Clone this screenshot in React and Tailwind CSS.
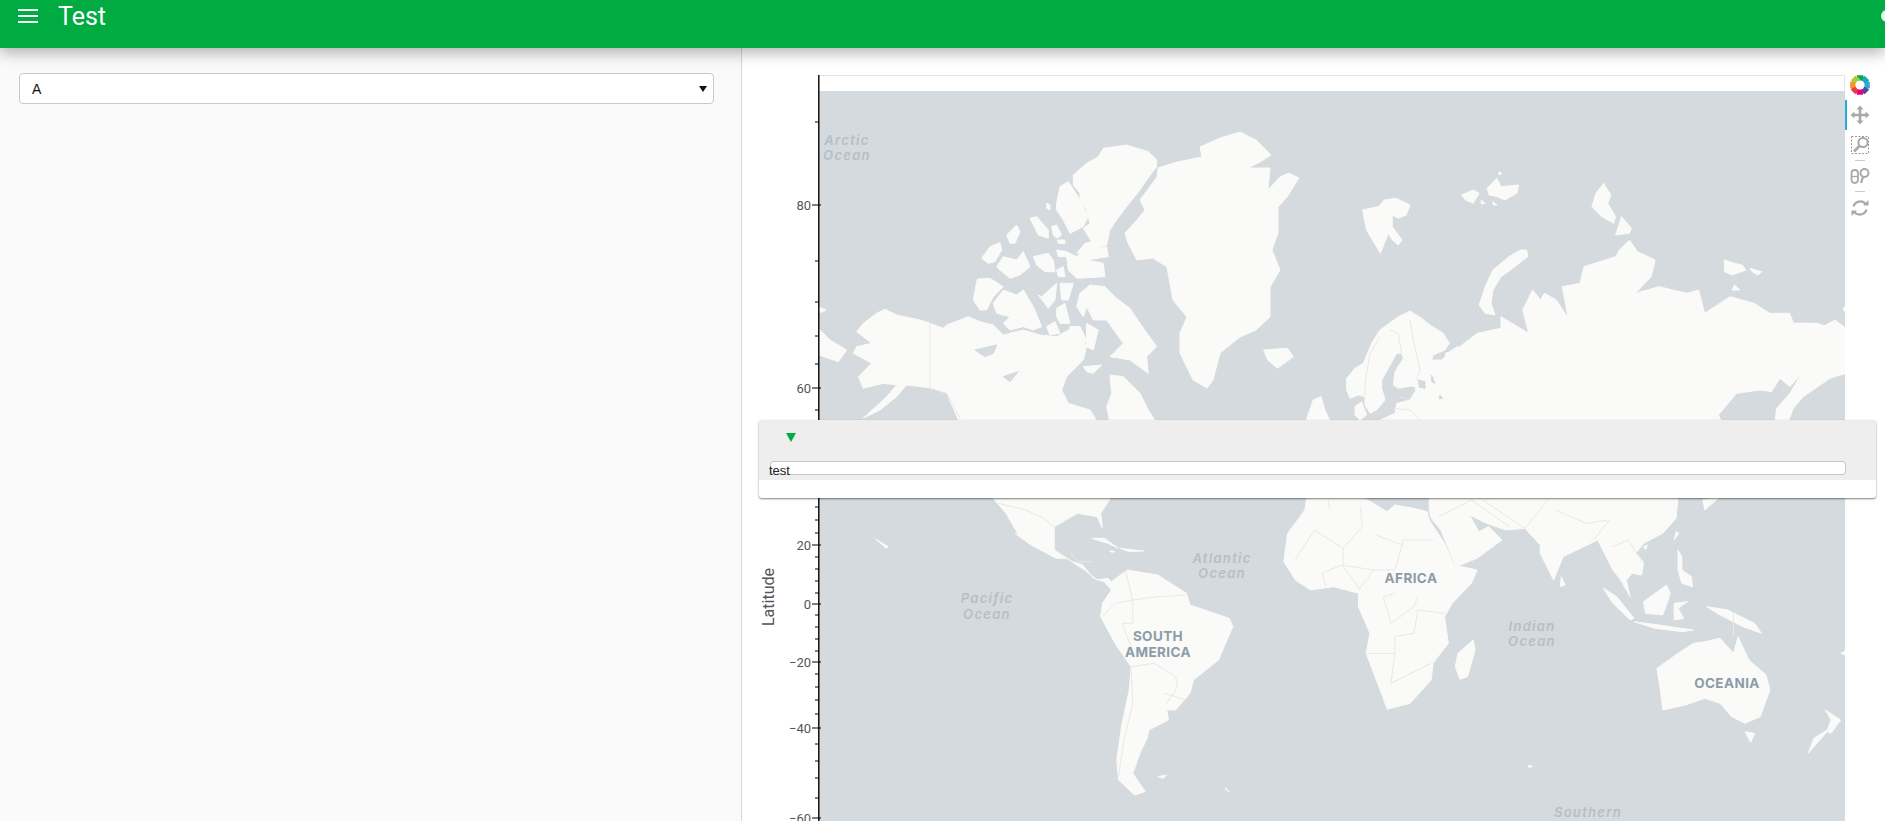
import React from "react";

const LAND = "#fafaf8";
const WATER = "#d4dadd";
const LINE = "#efe6e4";

// tick positions read off the latitude axis
const MAJOR = [
  [205, "80"], [388, "60"], [545, "20"], [604, "0"], [662, "−20"], [728, "−40"], [818, "−60"],
];
const MINOR = [122, 261, 302, 336, 364, 410, 507, 520, 533, 557, 569, 581, 593, 615, 627, 639, 651, 674, 687, 700, 714, 744, 761, 778, 798];

// north part, traced at 3x from (740,60)
const NORTH_WEST = [
  "350,815 370,790 410,760 435,748 470,765 540,780 570,790 610,805 620,795 660,780 685,770 720,785 760,795 790,825 850,810 900,825 950,830 985,810 1020,830 1040,860 1030,900 1010,920 980,950 965,990 985,1030 1050,1050 1075,1090 1110,1090 1100,1040 1115,1000 1110,945 1150,950 1200,1000 1225,1050 1250,1090 660,1090 620,1000 580,985 500,975 470,1010 420,1050 370,1075 440,1010 470,975 430,970 370,985 355,950 395,910 340,880 350,860 395,850",
  "236,740 258,750 245,757 236,755",
  "236,805 270,840 320,870 295,905 236,885",
  "700,720 712,657 750,655 790,680 760,710 740,750 720,750",
  "760,730 790,690 830,705 850,690 880,740 905,800 880,810 850,800 810,810 790,790 810,770 770,760",
  "725,595 750,560 780,548 785,570 765,605 745,610",
  "770,620 790,590 830,600 850,575 870,620 840,645 810,655 780,630",
  "800,525 830,495 840,515 825,550 810,550",
  "870,475 890,470 925,510 925,535 895,525",
  "935,500 950,495 965,525 950,535 940,525",
  "880,590 925,580 940,600 945,635 915,635 890,615",
  "950,570 980,575 1010,590 1030,570 1100,560 1105,590 1040,600 1090,610 1095,650 1010,655 985,630 980,590 955,590",
  "950,630 970,620 975,650 955,650",
  "920,430 930,435 930,450 920,445",
  "952,540 975,540 975,550 955,550",
  "1000,345 1040,310 1075,290 1090,265 1160,255 1225,275 1250,300 1250,320 1220,360 1200,390 1160,440 1130,480 1110,510 1100,555 1040,570 1010,580 1035,550 1055,545 1030,505 1050,490 1040,450 1020,420 1020,400 1000,375",
  "950,430 960,380 985,365 1015,410 1045,470 1030,500 990,520 970,480 950,450",
  "1020,700 1050,675 1095,680 1130,715 1170,745 1200,790 1250,860 1220,890 1225,940 1170,900 1110,890 1150,850 1100,780 1060,780 1040,740 1030,770 1010,740",
  "905,710 950,670 945,720 925,745 895,705",
  "960,670 1000,670 985,720 965,720",
  "1030,920 1085,915 1060,940 1040,935",
  "950,745 975,730 990,790 960,790 950,770",
  "920,800 945,785 960,820 930,825",
  "990,800 1020,800 1040,840 1020,870 985,830",
  "1040,790 1075,810 1060,870 1040,860",
];
const NORTH_WEST_WATER = [
  "705,870 770,855 760,880 735,890",
  "790,950 835,935 810,965",
  "1100,810 1130,830 1120,850 1095,835",
];

// page coordinates, greenland crosses two crops
const GREENLAND = "1125,233 1137,220 1145,210 1140,200 1157,177 1158,168 1177,162 1202,157 1200,147 1220,138 1240,132 1256,140 1271,155 1260,162 1248,168 1270,168 1268,190 1280,177 1289,173 1299,178 1287,197 1278,207 1278,233 1272,250 1280,270 1270,287 1270,317 1256,330 1240,337 1220,353 1213,380 1207,388 1193,380 1180,353 1180,333 1187,317 1173,300 1167,267 1153,258 1137,260 1128,243";

// traced from (1240,60), 2.53x by 3x
const NORTH_EAST = [
  "60,870 120,865 135,890 95,925 70,900",
  "310,450 350,440 365,420 395,415 430,435 420,465 400,475 385,465 385,500 410,540 400,555 385,540 375,520 355,580 335,540 320,510",
  "560,405 590,390 605,400 590,430 570,420",
  "625,385 650,355 660,380 705,375 700,400 670,420 650,410 630,405",
  "610,420 620,430 610,432",
  "640,425 650,435 640,435",
  "655,335 662,340 655,345",
  "725,570 728,590 690,625 660,650 640,690 635,730 645,765 620,760 605,735 620,680 640,630 680,590 710,570",
  "920,370 938,405 930,430 950,470 945,490 915,470 890,440 900,400",
  "965,470 990,505 985,520 950,525",
  "1225,600 1250,610 1270,615 1280,630 1245,645 1225,635",
  "1290,625 1320,635 1310,645 1295,635",
  "1250,675 1265,690 1245,690",
  "1525,745 1532,740 1532,760",
  "520,880 545,870 600,820 660,805 660,770 730,820 715,750 740,690 760,720 770,700 800,720 830,775 815,680 860,670 870,620 950,590 960,570 985,540 1005,575 1050,600 1040,650 1000,700 1060,680 1130,700 1160,690 1175,760 1240,710 1300,730 1340,760 1390,760 1400,790 1460,790 1532,820 1532,880 1300,900 1100,1090 520,1090",
  "185,1020 205,1010 215,1050 230,1090 165,1090",
];

// nordics, traced at 3x from (1330,300)
const NORDIC = [
  "50,235 75,205 100,190 125,130 150,90 205,50 240,33 275,55 300,75 340,100 358,130 345,150 310,165 305,180 335,180 365,150 382,140 420,360 140,365 195,340 200,310 240,300 255,275 258,262 245,258 205,265 190,255 195,215 220,175 215,160 200,160 175,205 155,240 155,265 165,300 140,330 120,340 105,315 105,290 85,285 60,295 50,270",
  "75,320 95,305 110,345 90,360 75,345",
];
const NORDIC_WATER = ["305,225 315,250 305,245", "330,285 338,295 328,297", "265,240 285,245 285,265 268,262"];
const NORDIC_BORDERS = [
  "150,110 120,160 105,250 105,290", "180,90 205,100 215,160", "240,60 250,120 270,210 260,240", "190,325 240,330 270,360", "210,290 240,300",
];

// okhotsk and kamchatka, traced at 3x from (1590,300)
const FAR_EAST = ["768,85 768,220 720,235 640,290 610,325 595,365 555,365 560,325 600,280 635,220 600,260 570,235 545,275 510,270 440,280 385,345 395,365 100,365 100,60 530,45 580,40 605,70 660,70 690,85 735,60"];

// traced from (740,490), 2.8x by 3x
const SOUTH_WEST = [
  "705,20 745,70 780,135 770,130 815,165 885,205 915,205 965,240 1000,270 1030,265 1040,275 1085,240 1170,255 1250,310 1260,345 1370,385 1380,410 1340,510 1270,570 1260,610 1220,660 1195,660 1200,690 1145,720 1140,745 1120,790 1100,850 1135,905 1105,915 1060,870 1055,810 1070,700 1090,600 1095,530 1050,460 1010,380 1015,340 1040,300 1020,275 990,265 960,225 930,215 880,180 880,110 945,70 1000,80 1015,115 1010,70 1040,20",
  "985,145 1020,145 1060,175 1030,160",
  "1065,175 1130,183 1090,185",
  "1035,182 1050,185 1040,187",
  "1170,860 1195,855 1185,865",
  "380,147 415,170 410,175",
  "1358,893 1370,905 1362,900",
];

// traced from (1280,490), 2.61x by 3x
const SOUTH_EAST = [
  "215,20 280,65 300,45 350,55 385,65 390,90 430,160 455,225 515,240 500,280 450,340 430,380 440,460 400,520 395,570 340,640 280,658 265,610 225,490 235,430 205,350 205,310 140,290 80,300 40,270 10,215 20,130 65,60 70,20",
  "390,20 390,60 395,85 420,120 460,230 515,205 580,150 545,110 520,125 495,75 540,100 590,120 640,115 680,165 680,190 715,270 740,200 830,150 870,240 890,270 915,320 905,270 920,250 945,255 950,215 930,190 950,160 1000,130 1035,85 1040,20",
  "735,260 745,285 732,290",
  "505,450 510,480 490,560 470,568 458,530 465,490",
  "845,295 880,320 925,385 915,390 870,340",
  "925,395 990,405 1080,420 1050,425 980,415",
  "950,335 1010,285 1020,310 1010,345 1000,375 955,370",
  "1030,340 1065,335 1040,355 1055,385 1030,390",
  "1040,180 1050,200 1050,240 1075,260 1078,290 1050,280 1040,240",
  "1035,125 1042,130 1030,150",
  "950,170 960,165 955,180",
  "1115,350 1170,360 1240,400 1258,430 1210,410 1150,375",
  "985,535 1040,490 1080,460 1110,455 1150,445 1185,490 1197,440 1225,510 1270,555 1280,600 1255,680 1215,700 1180,680 1150,640 1110,625 1060,645 1000,660 995,610",
  "1215,725 1240,730 1230,757",
  "1425,660 1465,690 1440,730 1430,725 1380,790 1395,745 1430,720 1440,690",
  "1105,30 1150,20 1110,60",
  "650,825 660,830 650,832",
  "1465,490 1478,482 1478,495",
];

const BORDERS_SW = [
  "725,40 800,60 850,85 880,110", "925,185 945,215 985,215", "1080,245 1090,290 1100,330 1050,340 1015,380",
  "1100,330 1170,320 1250,315", "1100,330 1100,400 1070,400 1095,470", "1095,530 1160,520 1220,560 1225,590 1195,640",
  "1095,530 1100,640 1075,750 1060,860", "1190,610 1250,630",
];
const BORDERS_SE = [
  "125,30 130,60", "210,50 215,110 165,175 90,120 40,210", "165,175 165,230 210,300", "250,135 320,165 320,150 400,150",
  "320,165 300,240 245,240 205,300", "245,240 160,225 110,250 120,290", "300,310 270,320 290,400 350,350 360,320",
  "430,370 360,360 350,430 300,440 300,490 225,490", "300,490 290,580 360,540 395,520", "415,80 500,30 600,110", "530,30 640,115 700,30",
  "720,60 800,100 860,90 820,150", "870,170 910,150 950,220", "1185,365 1185,440",
];
const BORDERS_NW = ["570,790 570,985 620,1000 660,1075"];

const LABELS = [
  { x: 847, y: 145, t: "Arctic", o: true }, { x: 847, y: 160, t: "Ocean", o: true },
  { x: 987, y: 603, t: "Pacific", o: true }, { x: 987, y: 619, t: "Ocean", o: true },
  { x: 1222, y: 563, t: "Atlantic", o: true }, { x: 1222, y: 578, t: "Ocean", o: true },
  { x: 1532, y: 631, t: "Indian", o: true }, { x: 1532, y: 646, t: "Ocean", o: true },
  { x: 1588, y: 817, t: "Southern", o: true },
  { x: 1158, y: 641, t: "SOUTH" }, { x: 1158, y: 657, t: "AMERICA" },
  { x: 1411, y: 583, t: "AFRICA" }, { x: 1727, y: 688, t: "OCEANIA" },
];

function Land({ shapes, water, borders, transform }) {
  return (
    <g transform={transform}>
      {shapes.map((p, i) => (
        <polygon key={i} points={p} fill={LAND} stroke={LAND} strokeLinejoin="round" strokeWidth="1" vectorEffect="non-scaling-stroke" />
      ))}
      {(water || []).map((p, i) => (
        <polygon key={i} points={p} fill={WATER} stroke={WATER} strokeLinejoin="round" strokeWidth="1" vectorEffect="non-scaling-stroke" />
      ))}
      {(borders || []).map((p, i) => (
        <polyline key={i} points={p} fill="none" stroke={LINE} strokeWidth="1" vectorEffect="non-scaling-stroke" />
      ))}
    </g>
  );
}

function MapChart() {
  return (
    <svg viewBox="742 48 1103 773" className="w-[1103px] h-[773px] shrink-0 block" style={{ fontFamily: "Roboto, sans-serif" }}>
      <rect x="819" y="91" width="1026" height="730" fill={WATER} />
      <Land shapes={NORTH_WEST} water={NORTH_WEST_WATER} borders={BORDERS_NW} transform="translate(740 60) scale(0.3333)" />
      <polygon points={GREENLAND} fill={LAND} stroke={LAND} strokeLinejoin="round" />
      <Land shapes={NORTH_EAST} transform="translate(1240 60) scale(0.3954 0.3333)" />
      <Land shapes={FAR_EAST} transform="translate(1590 300) scale(0.3333)" />
      <Land shapes={NORDIC} water={NORDIC_WATER} borders={NORDIC_BORDERS} transform="translate(1330 300) scale(0.3333)" />
      <Land shapes={SOUTH_WEST} borders={BORDERS_SW} transform="translate(740 490) scale(0.3571 0.3333)" />
      <Land shapes={SOUTH_EAST} borders={BORDERS_SE} transform="translate(1280 490) scale(0.3827 0.3333)" />
      {LABELS.map((l) => (
        <text
          key={l.t + l.x}
          x={l.x}
          y={l.y}
          textAnchor="middle"
          fill={l.o ? "#b5bfc8" : "#8d9ba8"}
          fontSize={l.o ? 13 : 13.5}
          fontWeight={l.o ? 600 : 700}
          fontStyle={l.o ? "italic" : "normal"}
          letterSpacing={l.o ? 1.3 : 0.4}
          fontFamily="Inter, sans-serif"
        >
          {l.t}
        </text>
      ))}

      {/* frame */}
      <path d="M819 75.5H1844.5V91" fill="none" stroke="#e5e5e5" />

      {/* latitude axis */}
      <path d="M818.8 75V821" stroke="#000" strokeWidth="1.4" />
      {MINOR.map((y) => <path key={y} d={`M815 ${y}H819`} stroke="#000" />)}
      {MAJOR.map(([y, t]) => (
        <g key={t}>
          <path d={`M812 ${y}H821`} stroke="#000" />
          <text x="811" y={y + 4.5} textAnchor="end" fontSize="13" fill="#555">{t}</text>
        </g>
      ))}
      <text transform="translate(774 597) rotate(-90)" textAnchor="middle" fontSize="16" fill="#555">Latitude</text>
    </svg>
  );
}

function BokehLogo() {
  const colors = ["#00a651", "#1fa9b5", "#27aae1", "#6a3d9a", "#e6007e", "#ee3a43", "#f7941d", "#a6ce39"];
  return (
    <svg width="20" height="20" viewBox="-10 -10 20 20">
      {colors.map((c, i) => (
        <polygon key={c} points="-3.2,-9.8 3.2,-9.8 4.6,-4 -2,-4.2" fill={c} transform={`rotate(${i * 45})`} />
      ))}
      <circle r="4.6" fill="#fff" />
    </svg>
  );
}

function ToolIcon({ children }) {
  return <svg width="24" height="24" viewBox="0 0 24 24" fill="none" stroke="#a6a9ab">{children}</svg>;
}

function Toolbar() {
  return (
    <div className="w-[30px] shrink-0 flex flex-col items-center pt-[27px]">
      <div className="h-[25px]"><BokehLogo /></div>
      <div className="relative w-full h-[30px] flex items-center justify-center">
        <span className="absolute left-0 top-0 bottom-0 w-[2px] bg-[#26aae1]" />
        <ToolIcon>
          <path d="M12 5V19M5 12H19" strokeWidth="2.6" />
          <path d="M12 2.5L15.5 6.5H8.5ZM12 21.5L15.5 17.5H8.5ZM2.5 12L6.5 8.5V15.5ZM21.5 12L17.5 8.5V15.5Z" fill="#a6a9ab" stroke="none" />
        </ToolIcon>
      </div>
      <div className="w-full h-[30px] flex items-center justify-center">
        <ToolIcon>
          <rect x="3.5" y="3.5" width="17" height="17" strokeDasharray="2 1.5" stroke="#999" />
          <circle cx="15" cy="9.5" r="4.6" strokeWidth="2" />
          <path d="M11.5 13L6 18.5" strokeWidth="2.6" />
        </ToolIcon>
      </div>
      <div className="w-[10px] h-px bg-[#ccc]" />
      <div className="w-full h-[30px] flex items-center justify-center">
        <ToolIcon>
          <rect x="3.5" y="6" width="6.5" height="13" rx="3.2" strokeWidth="1.8" />
          <path d="M4 12.5H9.5" strokeWidth="1.4" />
          <circle cx="16.5" cy="9" r="4" strokeWidth="2" />
          <path d="M15 13L13 19" strokeWidth="2.2" />
        </ToolIcon>
      </div>
      <div className="w-[10px] h-px bg-[#ccc]" />
      <div className="w-full h-[31px] flex items-center justify-center">
        <ToolIcon>
          <path d="M5.5 10.5A7 7 0 0 1 18 8.5" strokeWidth="2.2" />
          <path d="M18.5 13.5A7 7 0 0 1 6 15.5" strokeWidth="2.2" />
          <path d="M15 9.5H20.5V4ZM9 14.5H3.5V20Z" fill="#a6a9ab" stroke="none" />
        </ToolIcon>
      </div>
    </div>
  );
}

export default function App() {
  return (
    <div className="w-full h-[821px] overflow-hidden flex flex-col bg-white" style={{ fontFamily: "Roboto, sans-serif" }}>
      <header className="relative z-10 h-12 shrink-0 bg-[#00ab42] shadow-[0_5px_14px_rgba(0,0,0,0.3)] text-white flex justify-between pl-[18px] pt-[8px]">
        <div className="flex items-start">
          <svg width="20" height="14" viewBox="0 0 20 14" fill="#fff" className="mt-px">
            <rect y="0" width="20" height="2" />
            <rect y="6" width="20" height="2" />
            <rect y="12" width="20" height="2" />
          </svg>
          <h1 className="ml-5 text-[25px] leading-[14px] pt-[2px] font-normal">Test</h1>
        </div>
        <span className="w-3 h-3 rounded-full bg-[#e8f5ec] mt-[2px] -mr-[8px]" />
      </header>

      <div className="flex-1 flex min-h-0">
        <aside className="w-[742px] shrink-0 bg-[#fafafa] border-r border-[#d8d8d8] pl-[19px] pr-[27px] pt-[25px]">
          <div className="relative">
            <select
              defaultValue="A"
              className="w-full h-[31px] appearance-none bg-white border border-[#c8c8c8] rounded pl-3 text-sm text-[#111] outline-none"
              style={{ fontFamily: "'Liberation Sans', sans-serif" }}
            >
              <option>A</option>
            </select>
            <svg width="8" height="6" viewBox="0 0 8 6" className="absolute right-[7px] top-[13px]">
              <path d="M0 0H8L4 6Z" fill="#111" />
            </svg>
          </div>
        </aside>

        <main className="relative flex-1 flex min-w-0">
          <MapChart />
          <Toolbar />

          <section className="absolute left-[17px] top-[372px] w-[1117px] h-[78px] bg-white rounded-[3px] shadow-[0_1px_2px_rgba(0,0,0,0.5)] overflow-hidden">
            <div className="h-[60px] bg-[#eeeeee] pt-[13px] pl-[27px]">
              <svg width="10" height="9" viewBox="0 0 10 9" className="block">
                <path d="M0 0H10L5 9Z" fill="#00ab42" />
              </svg>
              <div className="relative mt-[19px] -ml-[16px] w-[1076px] h-[14px] bg-white border border-[#c4c4c4] rounded-[4px]">
                <span
                  className="absolute -left-[2px] top-[1px] text-[13px] leading-[16px] text-[#222]"
                  style={{ fontFamily: "'Liberation Sans', sans-serif" }}
                >
                  test
                </span>
              </div>
            </div>
          </section>
        </main>
      </div>
    </div>
  );
}
